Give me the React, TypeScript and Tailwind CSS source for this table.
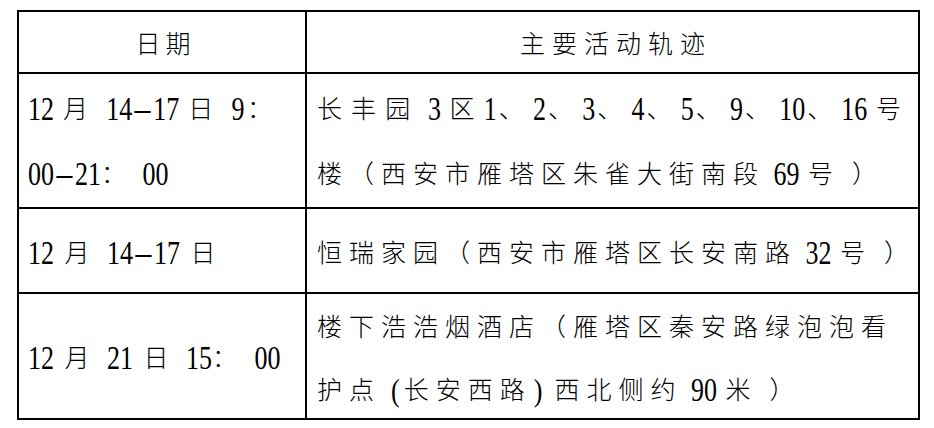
import React from 'react';

// tokens: dash, half-width parens, spaces, digit runs, full-width close paren, other CJK text
const Txt = ({ s }: { s: string }) => {
  const parts = s.match(/-|[()]| +|[0-9:.]+|）|[^\x00-\x7f）]+/g) || [];
  return (
    <>
      {parts.map((p, i) => {
        if (p === '-') {
          return (
            <span key={i} className="inline-block w-[21px] text-center [text-align-last:center] [font-family:Liberation_Serif,serif] text-[26px] font-normal leading-none scale-x-[2.4]">
              -
            </span>
          );
        }
        if (p === '(') {
          return (
            <span key={i} className="inline-block pl-[10px] pr-[4px] [font-family:Liberation_Serif,serif] text-[26px] font-normal leading-none scale-y-[1.2]">
              (
            </span>
          );
        }
        if (p === ')') {
          return (
            <span key={i} className="inline-block pl-[2px] pr-[12px] [font-family:Liberation_Serif,serif] text-[26px] font-normal leading-none scale-y-[1.2]">
              )
            </span>
          );
        }
        if (p === '）') {
          return (
            <span key={i} className="pl-[12px]">
              ）
            </span>
          );
        }
        if (/^ +$/.test(p)) {
          return (
            <span key={i} className="[font-family:Liberation_Serif,serif] text-[26px]">
              {' '}
            </span>
          );
        }
        if (/^[0-9:.]+$/.test(p)) {
          return (
            <span key={i} className="inline-block [font-family:Liberation_Serif,serif] text-[26px] font-normal leading-none scale-y-[1.3]">
              {p}
            </span>
          );
        }
        return (
          <span key={i} className="tracking-[7px]">
            {p}
          </span>
        );
      })}
    </>
  );
};

type Line = { t: string; cls?: string };

const Cell = ({ lines, col, pt = 'pt-[3px]' }: { lines: Line[]; col: 1 | 2; pt?: string }) => (
  <div
    className={`flex flex-col justify-center border-r-2 border-b-2 border-black ${pt} ${
      col === 1 ? 'pl-[9px]' : 'pl-[10px]'
    }`}
  >
    {lines.map((l, i) => (
      <div key={i} className={`whitespace-nowrap leading-[63px] ${l.cls || ''}`}>
        <Txt s={l.t} />
      </div>
    ))}
  </div>
);

export default function App() {
  return (
    <div className="min-h-screen w-[934px] bg-white pl-[17px] pt-[10px] [font-family:Noto_Sans_CJK_SC,sans-serif] text-[25px] font-light text-black">
      <div className="grid w-[903px] grid-cols-[288px_613px] grid-rows-[62px_135px_85px_126px] border-l-2 border-t-2 border-black">
        {/* header */}
        <div className="flex items-center justify-center border-r-2 border-b-2 border-black pl-[7px] pt-[2px]">
          <span className="tracking-[5px]">日期</span>
        </div>
        <div className="flex items-center justify-center border-r-2 border-b-2 border-black pl-[7px] pt-[2px]">
          <span className="tracking-[7px]">主要活动轨迹</span>
        </div>

        {/* rows */}
        <Cell
          col={1}
          pt="pt-0"
          lines={[
            { t: '12 月 14-17 日 9：', cls: 'pr-[26px] [text-align-last:justify]' },
            { t: '00-21： 00', cls: '[word-spacing:3px]' },
          ]}
        />
        <Cell
          col={2}
          pt="pt-0"
          lines={[
            { t: '长丰园 3 区1、2、3、4、5、9、10、16 号', cls: 'pr-[10px] [text-align-last:justify]' },
            { t: '楼（西安市雁塔区朱雀大街南段 69 号）', cls: '[word-spacing:2px]' },
          ]}
        />

        <Cell col={1} lines={[{ t: '12 月 14-17 日', cls: '[word-spacing:4px]' }]} />
        <Cell col={2} lines={[{ t: '恒瑞家园（西安市雁塔区长安南路 32 号）', cls: '[word-spacing:2px]' }]} />

        <Cell col={1} lines={[{ t: '12 月 21 日 15： 00', cls: '[word-spacing:4px]' }]} />
        <Cell
          col={2}
          lines={[
            { t: '楼下浩浩烟酒店（雁塔区秦安路绿泡泡看' },
            { t: '护点(长安西路)西北侧约 90 米）', cls: '[word-spacing:2px]' },
          ]}
        />
      </div>
    </div>
  );
}
